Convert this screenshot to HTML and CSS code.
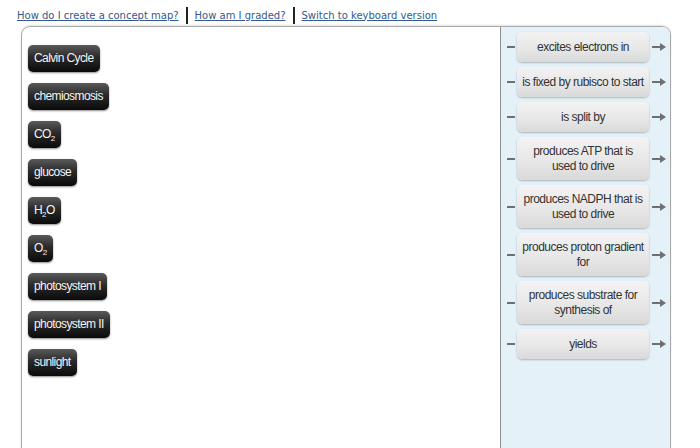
FILE: index.html
```html
<!DOCTYPE html>
<html lang="en">
<head>
<meta charset="utf-8">
<title>Concept map</title>
<link rel="stylesheet" href="styles.css">
</head>
<body>
<nav class="topnav">
  <a href="#" class="help-link">How do I create a concept map?</a>
  <span class="sep"></span>
  <a href="#" class="help-link">How am I graded?</a>
  <span class="sep"></span>
  <a href="#" class="help-link">Switch to keyboard version</a>
</nav>

<main class="map">
  <section class="terms">
    <div class="term">Calvin Cycle</div>
    <div class="term">chemiosmosis</div>
    <div class="term">CO<sub>2</sub></div>
    <div class="term">glucose</div>
    <div class="term">H<sub>2</sub>O</div>
    <div class="term">O<sub>2</sub></div>
    <div class="term">photosystem I</div>
    <div class="term">photosystem II</div>
    <div class="term">sunlight</div>
  </section>

  <aside class="links">
    <div class="link-row"><span class="dash"></span><div class="link">excites electrons in</div><svg class="arrow" viewBox="0 0 14 10"><path d="M0 5H9" /><polygon points="8,1 14,5 8,9" /></svg></div>
    <div class="link-row"><span class="dash"></span><div class="link">is fixed by rubisco to start</div><svg class="arrow" viewBox="0 0 14 10"><path d="M0 5H9" /><polygon points="8,1 14,5 8,9" /></svg></div>
    <div class="link-row"><span class="dash"></span><div class="link">is split by</div><svg class="arrow" viewBox="0 0 14 10"><path d="M0 5H9" /><polygon points="8,1 14,5 8,9" /></svg></div>
    <div class="link-row"><span class="dash"></span><div class="link two">produces ATP that is<br>used to drive</div><svg class="arrow" viewBox="0 0 14 10"><path d="M0 5H9" /><polygon points="8,1 14,5 8,9" /></svg></div>
    <div class="link-row"><span class="dash"></span><div class="link two">produces NADPH that is<br>used to drive</div><svg class="arrow" viewBox="0 0 14 10"><path d="M0 5H9" /><polygon points="8,1 14,5 8,9" /></svg></div>
    <div class="link-row"><span class="dash"></span><div class="link two">produces proton gradient<br>for</div><svg class="arrow" viewBox="0 0 14 10"><path d="M0 5H9" /><polygon points="8,1 14,5 8,9" /></svg></div>
    <div class="link-row"><span class="dash"></span><div class="link two">produces substrate for<br>synthesis of</div><svg class="arrow" viewBox="0 0 14 10"><path d="M0 5H9" /><polygon points="8,1 14,5 8,9" /></svg></div>
    <div class="link-row"><span class="dash"></span><div class="link">yields</div><svg class="arrow" viewBox="0 0 14 10"><path d="M0 5H9" /><polygon points="8,1 14,5 8,9" /></svg></div>
  </aside>
</main>
</body>
</html>
```

FILE: styles.css
```css
html, body {
  margin: 0;
  padding: 0;
  background: #fff;
}

body {
  width: 700px;
  height: 448px;
  overflow: hidden;
  font-family: "Liberation Sans", Arial, sans-serif;
}

/* help links above the map */
.topnav {
  display: flex;
  align-items: center;
  height: 16px;
  padding: 7px 0 0 17px;
}

.help-link {
  font-family: "DejaVu Sans", Verdana, sans-serif;
  font-size: 10px;
  color: #34598c;
  text-decoration: underline;
}

.sep {
  width: 2px;
  height: 17px;
  background: #222;
  margin: 0 7px;
}

/* concept map workspace */
.map {
  display: flex;
  margin: 3px 0 0 21px;
  width: 648px;
  height: 440px;
  border: 1px solid #a9a9a9;
  border-bottom: none;
  border-radius: 9px 9px 0 0;
  box-shadow: 0 -1px 2px rgba(0, 0, 0, 0.12);
  overflow: hidden;
}

.terms {
  flex: 1;
  display: flex;
  flex-direction: column;
  align-items: flex-start;
  gap: 11px;
  padding: 18px 0 0 6px;
}

.term {
  height: 27px;
  line-height: 27px;
  padding: 0 6px;
  border-radius: 5px;
  background: linear-gradient(#5a5a5a 0%, #2a2a2a 45%, #0a0a0a 100%);
  box-shadow: 0 1px 2px rgba(0, 0, 0, 0.45);
  color: #f4f4f4;
  font-size: 12px;
  letter-spacing: -0.6px;
}

.term sub {
  font-size: 8px;
  line-height: 0;
  vertical-align: -3px;
}

/* linking phrases palette */
.links {
  width: 163px;
  background: #e4f1f9;
  border-left: 1px solid #8d8d8d;
  display: flex;
  flex-direction: column;
  gap: 5px;
  padding: 5px 0 0 6px;
}

.link-row {
  display: flex;
  align-items: center;
}

.dash {
  width: 8px;
  height: 2px;
  background: #6f6f6f;
  margin-right: 2px;
}

.link {
  width: 132px;
  height: 30px;
  display: flex;
  align-items: center;
  justify-content: center;
  text-align: center;
  border-radius: 5px;
  background: linear-gradient(#f3f3f3 0%, #e6e6e6 60%, #d9d9d9 100%);
  box-shadow: 0 1px 2px rgba(0, 0, 0, 0.25);
  color: #333;
  font-size: 12px;
  letter-spacing: -0.5px;
  line-height: 15px;
}

.link.two {
  height: 43px;
}

.arrow {
  width: 14px;
  height: 10px;
  margin-left: 3px;
}

.arrow path {
  stroke: #6f6f6f;
  stroke-width: 2;
  fill: none;
}

.arrow polygon {
  fill: #6f6f6f;
}
```
